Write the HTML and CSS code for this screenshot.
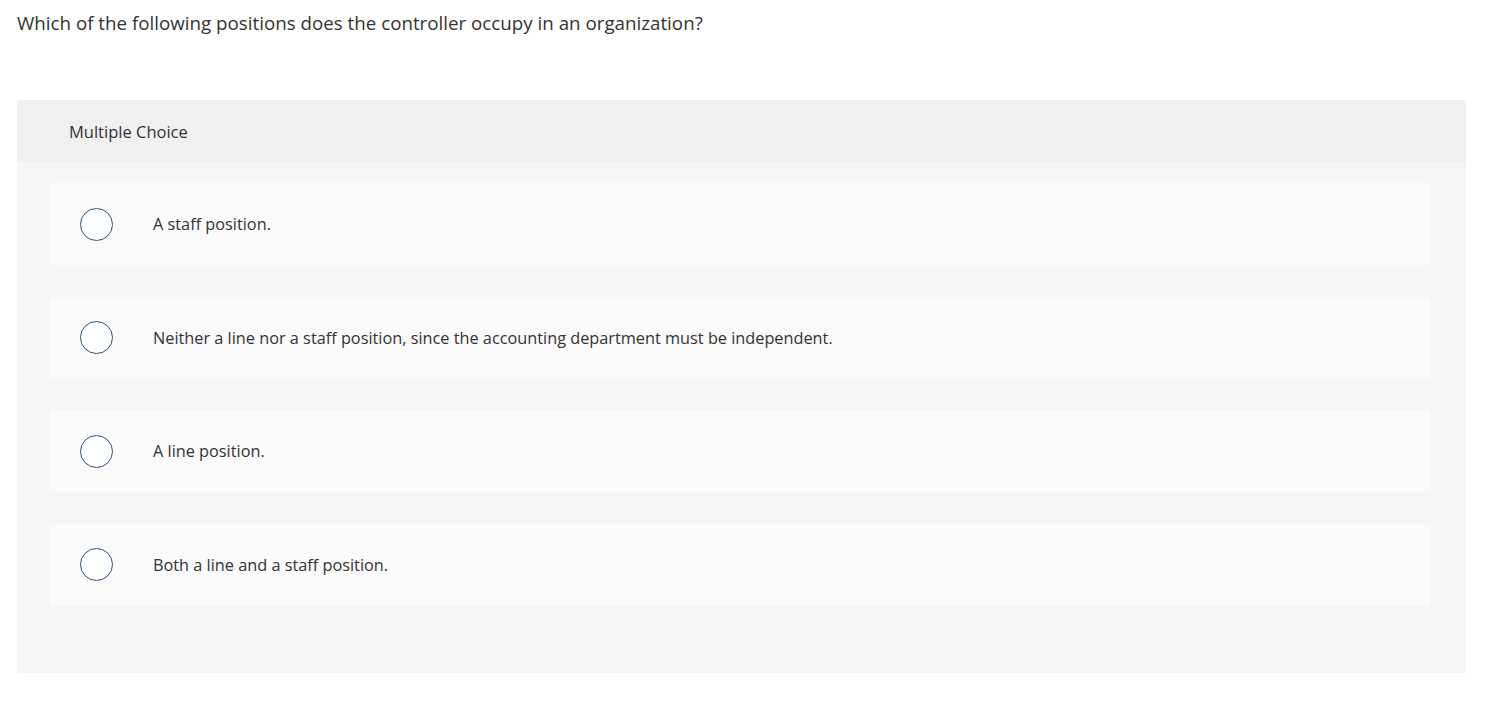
FILE: index.html
```html
<!DOCTYPE html>
<html>
<head>
<meta charset="utf-8">
<link rel="stylesheet" href="styles.css">
</head>
<body>
<div class="page">
  <p class="question">Which of the following positions does the controller occupy in an organization?</p>
  <div class="panel">
    <div class="panel-header">Multiple Choice</div>
    <div class="options">
      <div class="option"><span class="radio"></span><span class="label">A staff position.</span></div>
      <div class="option"><span class="radio"></span><span class="label">Neither a line nor a staff position, since the accounting department must be independent.</span></div>
      <div class="option"><span class="radio"></span><span class="label">A line position.</span></div>
      <div class="option"><span class="radio"></span><span class="label">Both a line and a staff position.</span></div>
    </div>
  </div>
</div>
</body>
</html>
```

FILE: styles.css
```css
html, body {
  margin: 0;
  padding: 0;
  background: #ffffff;
}
body {
  font-family: "Open Sans", "Liberation Sans", sans-serif;
  color: #333333;
}
.page {
  padding: 0 23px 0 17px;
}
.question {
  margin: 0;
  padding-top: 11px;
  font-size: 18.75px;
  line-height: 24px;
  height: 100px;
  box-sizing: border-box;
}
.panel {
  background: #f5f5f5;
  border-radius: 4px;
  overflow: hidden;
  height: 573px;
}
.panel-header {
  background: #f0f0f0;
  height: 62px;
  padding-left: 52px;
  display: flex;
  align-items: center;
  font-size: 16.5px;
}
.options {
  padding: 21px 35px 0 32px;
  display: flex;
  flex-direction: column;
  gap: 31.5px;
}
.option {
  background: #fafafa;
  border-radius: 4px;
  height: 82px;
  display: flex;
  align-items: center;
  padding-left: 31px;
  box-sizing: border-box;
}
.radio {
  width: 31px;
  height: 31px;
  border: 1.5px solid #2d5175;
  border-radius: 50%;
  background: #ffffff;
  flex: none;
}
.label {
  margin-left: 40px;
  font-size: 16.3px;
}
```
